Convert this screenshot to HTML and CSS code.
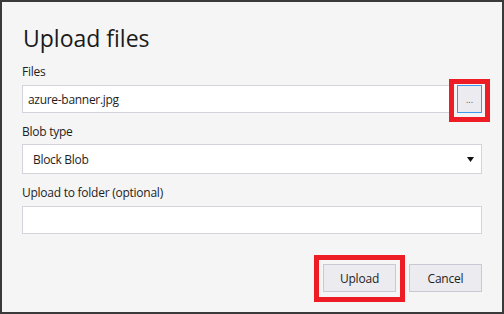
FILE: index.html
```html
<!DOCTYPE html>
<html lang="en">
<head>
  <meta charset="UTF-8" />
  <title>Upload files</title>
  <link rel="stylesheet" href="styles.css">
</head>
<body>
  <div class="dialog">
    <h1 class="title">Upload files</h1>

    <!-- Files -->
    <div class="label">Files</div>
    <div class="file-row">
      <input class="text-input" type="text" value="azure-banner.jpg" readonly>
      <button type="button" class="browse-btn marked">...</button>
    </div>

    <!-- Blob type -->
    <div class="label">Blob type</div>
    <div class="select">
      <span>Block Blob</span>
      <svg class="arrow" width="7" height="5" viewBox="0 0 7 5"><path d="M0 0h7L3.5 5z" fill="#111"/></svg>
    </div>

    <!-- Folder -->
    <div class="label">Upload to folder (optional)</div>
    <input class="text-input full" type="text">

    <div class="actions">
      <button type="button" class="btn marked wide">Upload</button>
      <button type="button" class="btn">Cancel</button>
    </div>
  </div>
</body>
</html>
```

FILE: styles.css
```css
body {
  margin: 0;
  font-family: 'Open Sans', 'Noto Sans', sans-serif;
  color: #1e1e1e;
}

.dialog {
  box-sizing: border-box;
  width: 504px;
  height: 314px;
  border: 2px solid #3a3a3a;
  background: #f5f5f5;
  padding: 20px 20px 0 20px;
  display: flex;
  flex-direction: column;
}

.title {
  margin: 0 0 10px 1px;
  font-size: 23px;
  line-height: 32px;
  font-weight: 400;
  color: #1a1a1a;
}

.label {
  font-size: 12px;
  line-height: 16px;
  letter-spacing: -0.25px;
  margin-bottom: 5px;
}

.file-row {
  display: flex;
  gap: 6px;
  margin-bottom: 11px;
}

.text-input {
  box-sizing: border-box;
  flex: 1;
  height: 28px;
  border: 1px solid #d3d3de;
  background: #fff;
  padding: 0 5px;
  font-family: inherit;
  font-size: 12px;
  letter-spacing: -0.3px;
  color: #1e1e1e;
  outline: none;
  margin: 0;
}

.text-input.full {
  flex: none;
  width: 100%;
}

.browse-btn {
  box-sizing: border-box;
  width: 25px;
  height: 28px;
  border: 1px solid #3c9bf0;
  background: #ebebf0;
  font-size: 9px;
  padding: 0;
  color: #555;
  font-family: inherit;
}

.select {
  box-sizing: border-box;
  height: 30px;
  margin-top: -1px;
  margin-bottom: 11px;
  border: 1px solid #d3d3de;
  background: #fff;
  display: flex;
  align-items: center;
  justify-content: space-between;
  padding: 0 7px 0 10px;
  font-size: 12px;
  letter-spacing: -0.3px;
}

.actions {
  display: flex;
  justify-content: flex-end;
  gap: 13px;
  margin-top: 30px;
}

.btn {
  box-sizing: border-box;
  width: 73px;
  height: 28px;
  border: 1px solid #c9c9d3;
  background: #ebebf0;
  font-family: inherit;
  font-size: 12px;
  letter-spacing: -0.2px;
  color: #1e1e1e;
  padding: 0;
}

.marked {
  position: relative;
}

.marked::after {
  content: "";
  position: absolute;
  top: -7px;
  left: -9px;
  right: -9px;
  bottom: -10px;
  border: 5px solid #ee1c25;
}

.marked.wide::after {
  top: -10px;
  left: -10px;
  right: -10px;
  bottom: -11px;
}
```
